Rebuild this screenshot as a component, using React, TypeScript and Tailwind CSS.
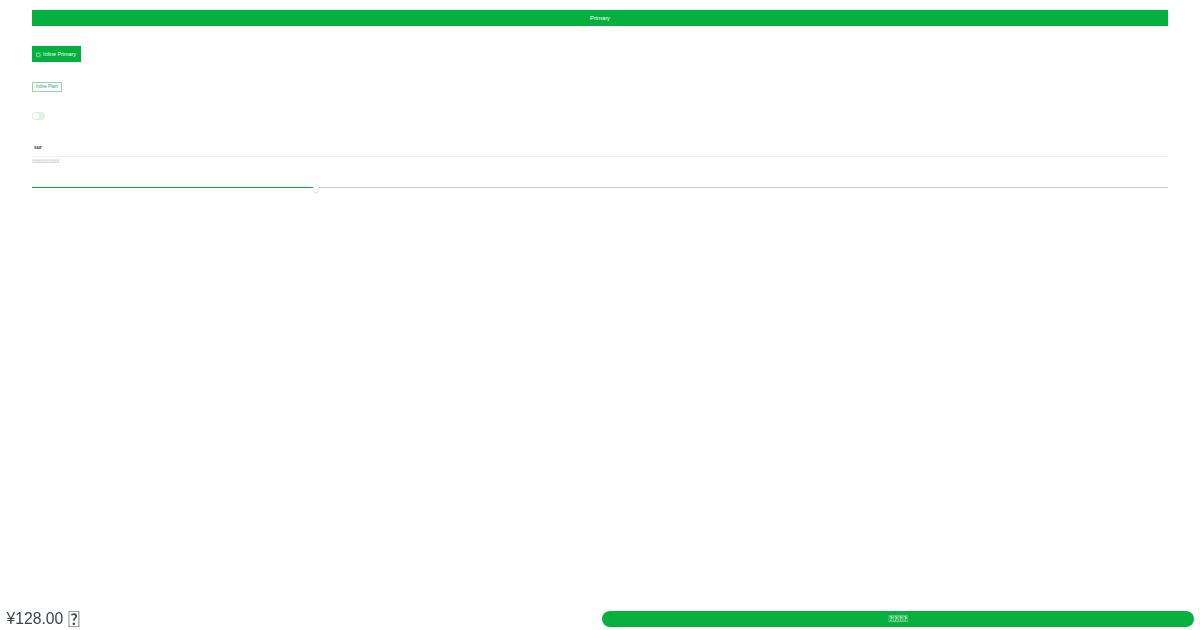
import React from 'react';

const tofu = (n: number) => '\uE000'.repeat(n);

export default function App() {
  return (
    <div className="h-[630px] w-[1200px] bg-white flex flex-col justify-between overflow-hidden font-['Liberation_Sans',sans-serif]">
      <div className="px-8 pt-[10px]">
        {/* Buttons */}
        <button className="block w-full h-4 bg-[#05b03e] text-white text-[5.8px] leading-4 text-center">Primary</button>

        <button className="mt-5 flex items-center gap-[2px] h-4 w-[49px] bg-[#00b13c] text-white text-[5.4px] pl-1">
          <svg width="5" height="5" viewBox="0 0 6 6" fill="none" stroke="white" strokeWidth="0.6">
            <path d="M0.5 1.2h3.6M0.5 1.2v4h4.5v-3M3.6 2.6l2-2" />
          </svg>
          <span>Inline Primary</span>
        </button>

        <button className="mt-5 block h-[10px] w-[30px] border border-[#8fdcaa] text-[#3f9f62] text-[4.5px] leading-[8px] text-center">Inline Plain</button>

        {/* Switch */}
        <div className="mt-5 flex items-center h-2 w-[13px] rounded-full bg-[#dff1e5] pl-[1px]">
          <div className="size-[6px] rounded-full bg-white" />
        </div>

        {/* Input */}
        <div className="mt-[23px] h-[14px] border-b border-[#f0f0f0] pl-[2px] text-[5px] leading-[9px] text-[#333] font-bold">sur</div>
        <div className="h-[7px] pt-[1px] text-[5.2px] leading-[7px] text-[#a8a8a8] font-['Lato',sans-serif]">{tofu(10)}</div>

        {/* Slider */}
        <div className="mt-[23px] flex items-start h-[3px]">
          <div className="h-px w-[281px] bg-[#07b03f]" />
          <div className="relative h-px flex-1 bg-[#c8c8c8]">
            <div className="absolute left-0 -top-[1px] size-[6px] rounded-full bg-white shadow-[0_1px_1px_rgba(0,0,0,0.15)]" />
          </div>
        </div>
      </div>

      {/* Bottom bar */}
      <div className="flex items-center justify-between h-4 pl-[6.5px] pr-[6px] mb-[3px]">
        <div className="flex items-center gap-[5px] text-[15.7px] leading-4 text-[#3b4351] whitespace-nowrap transform-gpu">
          <span>¥128.00</span>
          <span className="font-['Lato',sans-serif] text-[22px] leading-[22px]">{tofu(1)}</span>
        </div>
        <button className="h-4 w-[592px] rounded-full bg-[#07b03f] text-white text-[9px] leading-4 text-center font-['Lato',sans-serif]">{tofu(4)}</button>
      </div>
    </div>
  );
}
